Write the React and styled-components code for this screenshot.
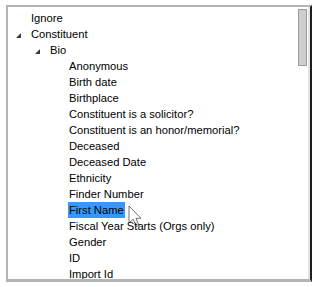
import React from 'react';
import styled, { createGlobalStyle } from 'styled-components';

const Global = createGlobalStyle`
  html, body { margin: 0; padding: 0; background: #fff; }
  body { font-family: "Liberation Sans", Arial, sans-serif; }
`;

const Page = styled.div`
  width: 320px;
  height: 287px;
  padding: 5px 8px 5px 6px;
  box-sizing: border-box;
  background: #fff;
`;

const Frame = styled.div`
  display: flex;
  height: 277px;
  border-top: 2px solid #b4b4b4;
  border-left: 2px solid #b4b4b4;
  border-bottom: 3px solid #b4b4b4;
  border-right: 2px solid #1e1e1e;
  box-sizing: border-box;
  overflow: hidden;
`;

const List = styled.div`
  flex: 1;
  padding-top: 3px;
  overflow: hidden;
`;

const Row = styled.div`
  position: relative;
  display: flex;
  align-items: center;
  height: 16px;
  padding-left: ${p => p.$level * 19 + 8}px;
  font-size: 11.2px;
  color: #000;
  white-space: nowrap;
`;

const Toggle = styled.span`
  display: inline-flex;
  width: 14px;
  justify-content: flex-start;
  align-items: center;
  padding-top: 2px;
`;

const Label = styled.span`
  position: relative;
  padding: 2px 1px 1px;
  line-height: 13px;
  background: ${p => (p.$selected ? '#3399ff' : 'transparent')};
`;

const Scroll = styled.div`
  width: 11px;
  display: flex;
  flex-direction: column;
  background: #fff;
  border-right: 2px solid #e3e3e3;
  padding-top: 2px;
`;

const Thumb = styled.div`
  width: 9px;
  height: 57px;
  margin-left: 1px;
  background: #cdcdcd;
  border: 1px solid #9a9a9a;
  box-sizing: border-box;
`;

const Pointer = styled.svg`
  position: absolute;
  top: 3px;
  left: calc(100% + 3px);
`;

const Expanded = () => (
  <svg width="5" height="5" viewBox="0 0 5 5">
    <polygon points="5,0 5,5 0,5" fill="#3a3a3a" />
  </svg>
);

const rows = [
  { t: 'Ignore', l: 0 },
  { t: 'Constituent', l: 0, open: true },
  { t: 'Bio', l: 1, open: true },
  { t: 'Anonymous', l: 2 },
  { t: 'Birth date', l: 2 },
  { t: 'Birthplace', l: 2 },
  { t: 'Constituent is a solicitor?', l: 2 },
  { t: 'Constituent is an honor/memorial?', l: 2 },
  { t: 'Deceased', l: 2 },
  { t: 'Deceased Date', l: 2 },
  { t: 'Ethnicity', l: 2 },
  { t: 'Finder Number', l: 2 },
  { t: 'First Name', l: 2, sel: true },
  { t: 'Fiscal Year Starts (Orgs only)', l: 2 },
  { t: 'Gender', l: 2 },
  { t: 'ID', l: 2 },
  { t: 'Import Id', l: 2 },
];

export default function App() {
  return (
    <Page>
      <Global />
      <Frame>
        <List>
          {rows.map(r => (
            <Row key={r.t} $level={r.l}>
              <Toggle>{r.open && <Expanded />}</Toggle>
              <Label $selected={r.sel}>
                {r.t}
                {r.sel && (
                  <Pointer width="14" height="23" viewBox="0 0 14 23">
                    <path
                      d="M1 1 L1 18 L5.2 14.2 L8.3 21.5 L11 20.4 L8 13.3 L13 13.3 Z"
                      fill="#fff"
                      stroke="#6e6e6e"
                      strokeWidth="1"
                      strokeLinejoin="round"
                    />
                  </Pointer>
                )}
              </Label>
            </Row>
          ))}
        </List>
        <Scroll>
          <Thumb />
        </Scroll>
      </Frame>
    </Page>
  );
}
